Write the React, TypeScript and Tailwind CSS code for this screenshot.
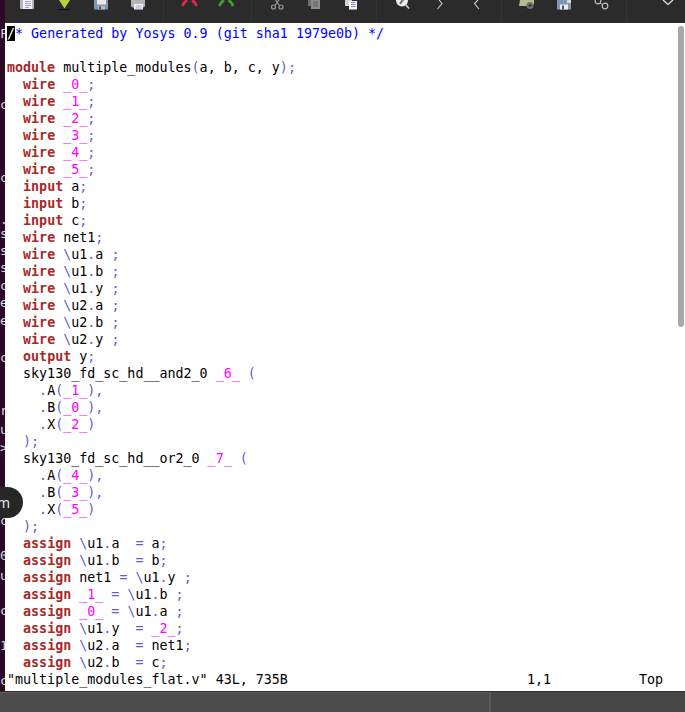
const KW = "text-[#a52a2a] font-bold";
const PUNC = "text-[#6a5acd]";
const ID = "text-[#ff00ff]";
const CMT = "text-[#0000ff]";

type Seg = [string, string?];

const lines: Seg[][] = [
  [["/", "bg-black text-white"], ["* Generated by Yosys 0.9 (git sha1 1979e0b) */", CMT]],
  [],
  [["module", KW], [" multiple_modules"], ["(", PUNC], ["a, b, c, y"], [");", PUNC]],
  ...["_0_", "_1_", "_2_", "_3_", "_4_", "_5_"].map((n): Seg[] => [["  "], ["wire", KW], [" "], [n, ID], [";", PUNC]]),
  ...["a", "b", "c"].map((n): Seg[] => [["  "], ["input", KW], [" " + n], [";", PUNC]]),
  [["  "], ["wire", KW], [" net1"], [";", PUNC]],
  ...["u1.a", "u1.b", "u1.y", "u2.a", "u2.b", "u2.y"].map((n): Seg[] => [
    ["  "], ["wire", KW], [" "], ["\\", PUNC], [n.slice(0, 2)], [".", PUNC], [n.slice(3)], [" "], [";", PUNC],
  ]),
  [["  "], ["output", KW], [" y"], [";", PUNC]],
  [["  sky130_fd_sc_hd__and2_0 "], ["_6_", ID], [" "], ["(", PUNC]],
  ...pins([["A", "_1_"], ["B", "_0_"], ["X", "_2_"]]),
  [["  "], [");", PUNC]],
  [["  sky130_fd_sc_hd__or2_0 "], ["_7_", ID], [" "], ["(", PUNC]],
  ...pins([["A", "_4_"], ["B", "_3_"], ["X", "_5_"]]),
  [["  "], [");", PUNC]],
  assign("\\u1.a", "  ", "a"),
  assign("\\u1.b", "  ", "b"),
  assign("net1", " ", "\\u1.y "),
  assign("_1_", " ", "\\u1.b "),
  assign("_0_", " ", "\\u1.a "),
  assign("\\u1.y", "  ", "_2_"),
  assign("\\u2.a", "  ", "net1"),
  assign("\\u2.b", "  ", "c"),
];

function pins(items: string[][]): Seg[][] {
  return items.map(([p, n], i) => [
    ["    "], [".", PUNC], [p], ["(", PUNC], [n, ID], [i < 2 ? ")," : ")", PUNC],
  ]);
}

function ref(s: string): Seg[] {
  if (s.startsWith("\\")) {
    const trail = s.endsWith(" ");
    const t = s.trim();
    const out: Seg[] = [["\\", PUNC], [t.slice(1, 3)], [".", PUNC], [t.slice(4)]];
    if (trail) out.push([" "]);
    return out;
  }
  if (s.startsWith("_")) return [[s, ID]];
  return [[s]];
}

function assign(l: string, gap: string, r: string): Seg[] {
  return [["  "], ["assign", KW], [" "], ...ref(l), [gap], ["=", PUNC], [" "], ...ref(r), [";", PUNC]];
}

// letters of the terminal behind the window, only their left edge shows
const behind: [number, string][] = [
  [26, "F"], [97, "c"], [170, "c"], [212, "."], [226, "s"], [243, "s"], [260, "s"], [278, "c"],
  [295, "e"], [313, "e"], [350, "c"], [403, "r"], [422, "u"], [440, ">"], [513, "c"],
  [548, "0"], [568, "u"], [603, "c"], [638, "1"], [673, "c"],
];

const Sep = () => <div className="w-px h-full bg-[#333333]" />;

const Toolbar = () => (
  <div className="h-[23px] bg-[#2b2b2b] overflow-hidden relative shrink-0">
    <svg width="680" height="23" viewBox="5 0 680 23" className="block">
      {/* new */}
      <path d="M20 0h14v8a1 1 0 0 1-1 1H21a1 1 0 0 1-1-1z" fill="#b8b8b8" />
      <path d="M23 0h9v9h-9z" fill="#f2f2f2" />
      <path d="M25 1.500h6M25 3.500h6M25 5.500h6M25 7.500h4" stroke="#9aa0d8" />
      {/* open */}
      <path d="M59 0h11l-5.500 8.500z" fill="#b9cf3f" />
      <path d="M58 9.500h12" stroke="#111111" />
      {/* save */}
      <path d="M94 0h14v9.500H94z" fill="#7f97b5" />
      <path d="M97 0h9v4.500h-9z" fill="#e8e8e8" />
      <path d="M98 6h7v3.500h-7z" fill="#b9b9b9" />
      <path d="M99 6.500h2v3h-2z" fill="#44546a" />
      {/* print */}
      <path d="M131 0h14v5.500a2 2 0 0 1-2 2h-10a2 2 0 0 1-2-2z" fill="#b4b4b4" />
      <path d="M134 4h9v5.500h-9z" fill="#f6f6f6" />
      <path d="M135.500 6h6M135.500 8h6" stroke="#9aa0d8" />
      {/* undo, redo */}
      <path d="M182.500 6Q183.500 2.500 187 0M196.500 6Q195.500 2.500 192 0" stroke="#dc2a40" strokeWidth="2.800" fill="none" />
      <path d="M219.500 6Q220.500 2.500 224 0M233 6Q232 2.500 228.500 0" stroke="#3e9e2e" strokeWidth="2.800" fill="none" />
      {/* cut */}
      <circle cx="273.500" cy="7" r="2" stroke="#9a9a9a" strokeWidth="1.200" fill="none" />
      <circle cx="281" cy="7" r="2" stroke="#9a9a9a" strokeWidth="1.200" fill="none" />
      <path d="M275 5.500L279 0M279.500 5.500L275.500 0" stroke="#9a9a9a" strokeWidth="1.200" />
      {/* copy */}
      <path d="M308 0h8v6h-8z" fill="#6e6e6e" />
      <path d="M311 0h9v9h-9z" fill="#8c8c8c" />
      <path d="M313 2h5M313 4h5M313 6h5" stroke="#5f5f5f" />
      {/* paste */}
      <path d="M345 0h7v6h-7z" fill="#d4d4d4" />
      <path d="M349 1h8v8.500h-8z" fill="#f6f6f6" />
      <path d="M351 2.500h4.500M351 4.500h4.500M351 6.500h4.500" stroke="#8088d0" />
      {/* find, next, prev */}
      <circle cx="402" cy="0.500" r="6" fill="#ececec" />
      <path d="M400 4L403 -1" stroke="#3a6fc0" strokeWidth="1.800" />
      <path d="M402 2L404 -1" stroke="#e07a28" strokeWidth="1.800" />
      <path d="M406 5l3 3.500" stroke="#d8d8d8" strokeWidth="1.600" />
      <path d="M439 0l3 3.500-4.500 5.500" stroke="#cfcfcf" strokeWidth="1.100" fill="none" />
      <path d="M478 0l-3.500 3.500 4.500 5.500" stroke="#cfcfcf" strokeWidth="1.100" fill="none" />
      {/* session, build, tools */}
      <path d="M520 0h14v4l-3 2h-12z" fill="#b7bb94" />
      <circle cx="530" cy="5.500" r="3.500" fill="#707070" />
      <circle cx="530" cy="5.500" r="1.300" fill="#2b2b2b" />
      <path d="M557 0h14v9.500h-14z" fill="#7f97b5" />
      <path d="M567 0h4v3h-4z" fill="#d8d8d8" />
      <path d="M560 4.500h8v5h-8z" fill="#ececec" />
      <path d="M562 5.500h2v4h-2z" fill="#44546a" />
      <circle cx="598" cy="1" r="2.800" stroke="#bdbdbd" strokeWidth="1.200" fill="none" />
      <circle cx="605" cy="6" r="2.800" stroke="#bdbdbd" strokeWidth="1.200" fill="none" />
      <path d="M600 3l2.500 1.500" stroke="#bdbdbd" />
      <path d="M663 0l5 4.500 5-4.500" stroke="#e4e4e4" strokeWidth="1.300" fill="none" />
    </svg>
    <div className="absolute inset-0 flex pointer-events-none">
      <div className="w-[158px]" />
      <Sep />
      <div className="w-[87px]" />
      <Sep />
      <div className="w-[124px]" />
      <Sep />
      <div className="w-[124px]" />
      <Sep />
      <div className="w-[124px]" />
      <Sep />
    </div>
  </div>
);

export default function App() {
  return (
    <div className="relative w-[685px] h-[712px] overflow-hidden flex flex-col bg-[#2b2b2b]">
      <div className="flex flex-1 min-h-0">
        <div className="relative w-[5px] bg-[#2c0a24] shrink-0 overflow-hidden font-['DejaVu_Sans_Mono',monospace] text-[13px] leading-[15px] text-[#d8d8d8]">
          {behind.map(([y, c]) => (
            <div key={y} className="absolute left-0" style={{ top: y }}>{c}</div>
          ))}
        </div>
        <div className="flex-1 min-w-0 flex flex-col">
          <Toolbar />
          <div className="relative flex-1 bg-white pl-[2px] pt-[2px] overflow-hidden font-['DejaVu_Sans_Mono',monospace] text-[13.33px] leading-[17px] text-black">
            {lines.map((l, i) => (
              <div key={i} className="h-[17px] whitespace-pre">
                {l.map((s, j) => (
                  <span key={j} className={s[1]}>{s[0]}</span>
                ))}
              </div>
            ))}
            <div className="absolute left-[2px] right-0 top-[648px] flex whitespace-pre">
              <span className="w-[520px]">"multiple_modules_flat.v" 43L, 735B</span>
              <span className="w-[112px]">1,1</span>
              <span>Top</span>
            </div>
            <div className="absolute top-[3px] right-[1px] w-[6px] h-[301px] rounded-full bg-[#a8a8a8]" />
          </div>
        </div>
      </div>
      <div className="h-[21px] bg-[#474747] border-t border-[#2f2f2f] flex shrink-0">
        <div className="w-[491px] bg-[#4c4c4c] border-t border-r-2 border-[#5a5a5a]" />
      </div>
      <div className="absolute left-0 top-[487px] w-[23px] h-[31px] rounded-r-full bg-[#262626] overflow-hidden flex items-center text-[#e8e8e8] text-[14px] font-['Noto_Sans',sans-serif]">
        <span className="-ml-[3px]">m</span>
      </div>
    </div>
  );
}
